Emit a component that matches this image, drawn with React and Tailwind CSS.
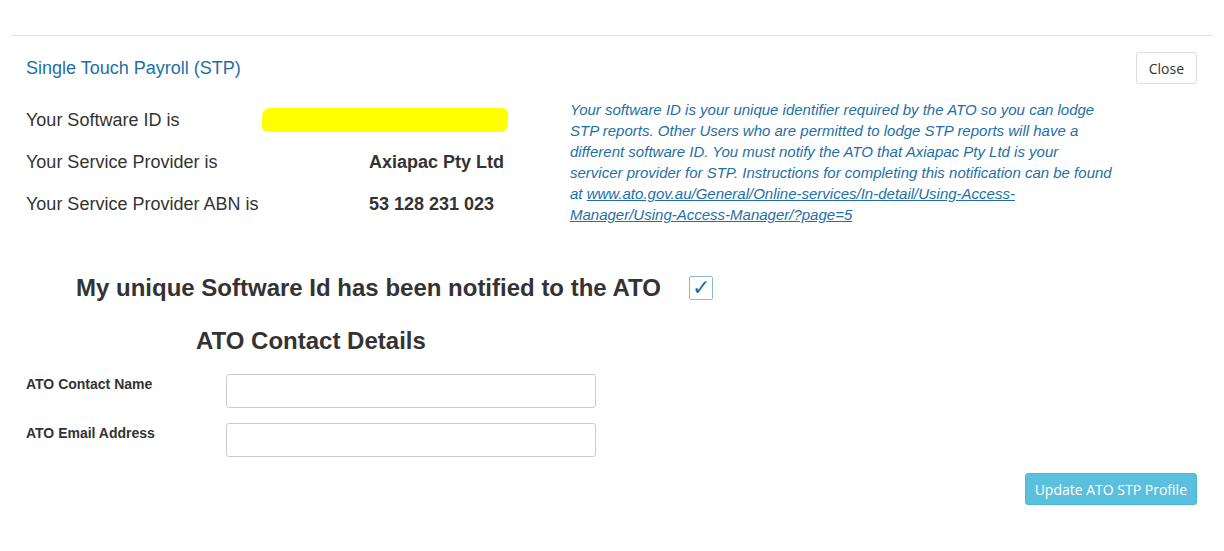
import React from "react";

function InfoRow({ label, children }) {
  return (
    <div className="flex items-center h-[42px]">
      <div className="w-[343px] shrink-0">{label}</div>
      <div className="font-bold">{children}</div>
    </div>
  );
}

export default function App() {
  return (
    <div className="w-[1224px] h-[551px] bg-white pt-[35px] px-[11px] font-['Liberation_Sans',Arial,sans-serif] text-[#333]">
      <div className="border-t border-[#e5e5e5]">
        {/* header */}
        <div className="flex items-center justify-between pl-[15px] pr-[16px] pt-[16px]">
          <h4 className="text-[18px] text-[#1e6fa7]">Single Touch Payroll (STP)</h4>
          <button className="h-[32px] px-[12px] border border-[#ddd] rounded-[3px] text-[14px] text-[#333] font-['Open_Sans',sans-serif] bg-white">
            Close
          </button>
        </div>

        {/* software details */}
        <div className="flex pl-[15px] mt-[15px]">
          <div className="w-[544px] shrink-0 text-[18px]">
            <div className="flex items-center h-[42px]">
              <div className="w-[236px] shrink-0">Your Software ID is</div>
              <div className="w-[246px] h-[24px] bg-[#ffff00] rounded-[7px] -skew-x-3"></div>
            </div>
            <InfoRow label="Your Service Provider is">Axiapac Pty Ltd</InfoRow>
            <InfoRow label="Your Service Provider ABN is">53 128 231 023</InfoRow>
          </div>
          <p className="w-[550px] text-[15px] leading-[21px] italic text-[#1e6fa7]">
            Your software ID is your unique identifier required by the ATO so you can lodge STP reports. Other Users
            who are permitted to lodge STP reports will have a different software ID. You must notify the ATO that
            Axiapac Pty Ltd is your
            <br />
            servicer provider for STP. Instructions for completing this notification can be found at{" "}
            <a className="underline" href="#">
              www.ato.gov.au/General/Online-services/In-detail/Using-Access-
              <br />
              Manager/Using-Access-Manager/?page=5
            </a>
          </p>
        </div>

        {/* notified checkbox */}
        <div className="flex items-center pl-[65px] mt-[45px]">
          <h3 className="text-[24px] font-bold">My unique Software Id has been notified to the ATO</h3>
          <div className="ml-[28px] w-[24px] h-[24px] border border-[#8fb8d6] rounded-[2px] flex items-center justify-center text-[#1e6fa7] text-[22px] leading-none">
            ✓
          </div>
        </div>

        <h3 className="text-[24px] font-bold pl-[185px] mt-[17px]">ATO Contact Details</h3>

        {/* contact form */}
        <div className="pl-[15px] mt-[15px] flex flex-col gap-[15px]">
          <div className="flex">
            <label className="w-[200px] shrink-0 text-[14px] font-bold">ATO Contact Name</label>
            <input className="w-[370px] h-[34px] border border-[#ccc] rounded-[3px] px-3 text-[14px]" />
          </div>
          <div className="flex">
            <label className="w-[200px] shrink-0 text-[14px] font-bold">ATO Email Address</label>
            <input className="w-[370px] h-[34px] border border-[#ccc] rounded-[3px] px-3 text-[14px]" />
          </div>
        </div>

        <div className="flex justify-end pr-[16px] mt-[16px]">
          <button className="h-[32px] px-[9px] bg-[#5bc0de] border border-[#46b8da] rounded-[3px] text-white text-[14px] font-['Open_Sans',sans-serif]">
            Update ATO STP Profile
          </button>
        </div>
      </div>
    </div>
  );
}
